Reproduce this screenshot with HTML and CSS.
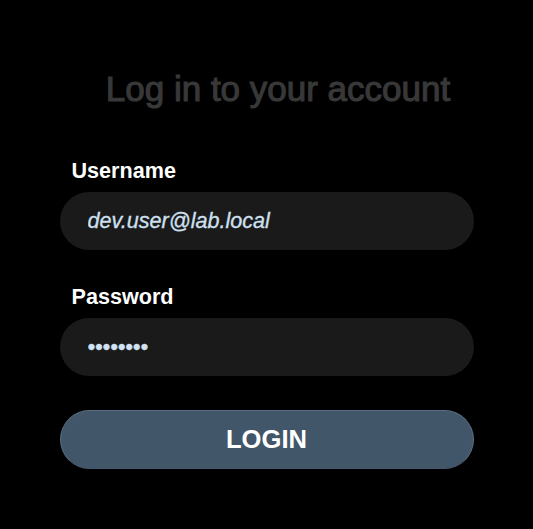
FILE: index.html
```html
<!DOCTYPE html>
<html lang="en">
<head>
<meta charset="utf-8">
<title>Log in</title>
<link rel="stylesheet" href="styles.css">
</head>
<body>
<main class="login">
  <h1 class="login-title">Log in to your account</h1>
  <form class="login-form">
    <label class="field-label" for="username">Username</label>
    <input class="field-input" id="username" type="text" value="dev.user@lab.local">
    <label class="field-label field-label-gap" for="password">Password</label>
    <input class="field-input field-input-secret" id="password" type="password" value="password">
    <button class="login-button" type="button">LOGIN</button>
  </form>
</main>
</body>
</html>
```

FILE: styles.css
```css
html, body {
  margin: 0;
  padding: 0;
  background: #000;
}

body {
  font-family: "Liberation Sans", Arial, Helvetica, sans-serif;
}

.login {
  width: 414px;
  margin: 0 auto;
  padding-top: 68px;
}

.login-title {
  margin: 0;
  padding-left: 23px;
  font-size: 35px;
  line-height: 42px;
  font-weight: normal;
  text-align: center;
  color: #383838;
  -webkit-text-stroke: 1.1px #383838;
}

.login-form {
  display: flex;
  flex-direction: column;
  margin-top: 48px;
}

.field-label {
  display: block;
  padding-left: 12px;
  font-size: 21.6px;
  line-height: 26px;
  font-weight: bold;
  color: #fff;
}

.field-label-gap {
  margin-top: 34px;
}

.field-input {
  box-sizing: border-box;
  height: 58.5px;
  margin-top: 7.5px;
  padding: 0 28px;
  border: none;
  border-radius: 30px;
  background: #1a1a1a;
  color: #cfe0f1;
  font-family: "Liberation Sans", Arial, Helvetica, sans-serif;
  font-size: 21.6px;
  font-style: italic;
  -webkit-text-stroke: 0.3px #cfe0f1;
  outline: none;
}

.field-input-secret {
  -webkit-text-stroke: 0.4px #d3e3f3;
  color: #d3e3f3;
}

.login-button {
  box-sizing: border-box;
  height: 59px;
  margin-top: 34px;
  border: 1px solid #5a6d81;
  border-bottom-color: #44586b;
  border-radius: 30px;
  background: #42566a;
  color: #fff;
  font-family: "Liberation Sans", Arial, Helvetica, sans-serif;
  font-size: 25.6px;
  font-weight: bold;
  line-height: 1;
  padding-top: 2px;
  cursor: pointer;
}
```
